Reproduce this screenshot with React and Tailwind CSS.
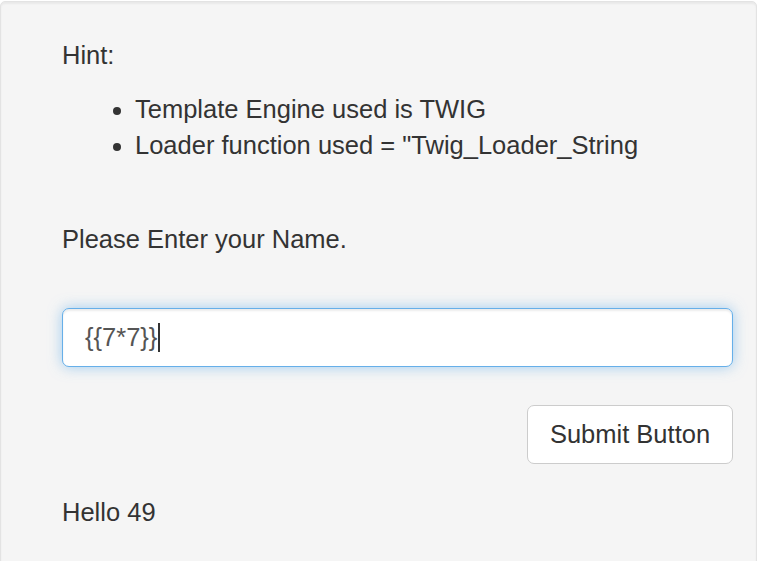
export default function App() {
  return (
    <div className="min-h-screen bg-white pt-[1px] pr-[2px] font-['Liberation_Sans',Arial,sans-serif] text-[25.5px] leading-[36.5px] text-[#333]">
      <div className="min-h-[620px] rounded-[5px] border border-[#e3e3e3] bg-[#f5f5f5] pt-[35px] pl-[61px] pr-[23px] shadow-[inset_0_2px_2px_rgba(0,0,0,0.05)]">
        <p className="mb-[17px]">Hint:</p>
        <ul className="mb-[18px] list-disc pl-[73px]">
          <li>Template Engine used is TWIG</li>
          <li>Loader function used = "Twig_Loader_String</li>
        </ul>
        <p className="mt-[57px]">Please Enter your Name.</p>
        <div className="mt-[51px] flex h-[59px] items-center rounded-[7px] border-[1.5px] border-[#66afe9] bg-white px-[22px] text-[#555] shadow-[inset_0_2px_2px_rgba(0,0,0,0.075),0_0_14px_rgba(102,175,233,0.6)]">
          <span>{"{{7*7}}"}</span>
          <span className="ml-[1px] inline-block h-[29px] w-[1.5px] bg-[#333]"></span>
        </div>
        <div className="mt-[38px] flex justify-end">
          <button className="h-[59px] w-[206px] rounded-[7px] border-[1.5px] border-[#ccc] bg-white text-[25.5px] text-[#333]">
            Submit Button
          </button>
        </div>
        <p className="mt-[30px]">Hello 49</p>
      </div>
    </div>
  );
}
